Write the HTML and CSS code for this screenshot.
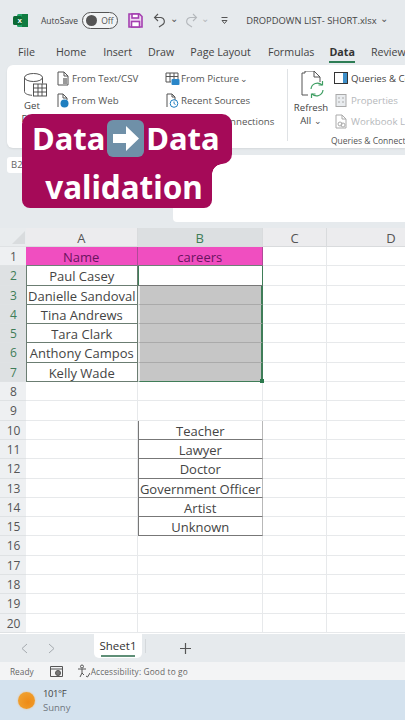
FILE: index.html
```html
<!DOCTYPE html>
<html lang="en">
<head>
<meta charset="utf-8">
<title>DROPDOWN LIST- SHORT.xlsx</title>
<link rel="stylesheet" href="styles.css">
</head>
<body>
<div class="app">
  <header class="titlebar">
    <svg class="logo" width="15" height="15" viewBox="0 0 15 15"><rect x="4" y="1" width="11" height="13" rx="1.5" fill="#21a366"/><rect x="9" y="1" width="6" height="13" fill="#107c41"/><rect y="3" width="9" height="9" rx="1.5" fill="#0b6a35"/><text x="4.5" y="10" class="logo-x">x</text></svg>
    <span class="autosave">AutoSave</span>
    <span class="toggle"><span class="knob"></span><span class="toggle-text">Off</span></span>
    <svg class="save" width="15" height="15" viewBox="0 0 15 15" fill="none" stroke="#a43fb0" stroke-width="1.6"><path d="M1 1h10.500L14 3.500V14H1z" fill="#efd9f2"/><rect x="4" y="1" width="6.500" height="4" fill="#fff"/><rect x="3.500" y="8.500" width="8" height="5.500" fill="#fff"/></svg>
    <svg class="undo" width="14" height="15" viewBox="0 0 14 15" fill="none" stroke="#555" stroke-width="1.1"><path d="M5 1 1.500 4.500 5 8M1.500 4.500h6.500a4 4 0 0 1 1 7.600L6 14"/></svg>
    <span class="caret">&#8964;</span>
    <svg class="redo" width="14" height="15" viewBox="0 0 14 15" fill="none" stroke="#b4b8bc" stroke-width="1.1"><path d="M9 1l3.500 3.500L9 8M12.500 4.500H6a4 4 0 0 0-1 7.600L8 14"/></svg>
    <span class="caret faint">&#8964;</span>
    <svg class="qat" width="9" height="9" viewBox="0 0 9 9" fill="none" stroke="#555"><path d="M1.500 1.500h6M2 4.500l2.500 3 2.500-3z"/></svg>
    <span class="filename">DROPDOWN LIST- SHORT.xlsx</span>
    <span class="caret file-caret">&#8964;</span>
  </header>

  <nav class="tabs">
    <span class="tab tab-file">File</span>
    <span class="tab tab-home">Home</span>
    <span class="tab tab-insert">Insert</span>
    <span class="tab tab-draw">Draw</span>
    <span class="tab tab-layout">Page Layout</span>
    <span class="tab tab-formulas">Formulas</span>
    <span class="tab tab-data">Data</span>
    <span class="tab tab-review">Review</span>
  </nav>

  <section class="ribbon">
    <div class="getdata">
      <svg width="23" height="24" viewBox="0 0 23 24" fill="none" stroke="#555" stroke-width="1"><ellipse cx="9.500" cy="4.500" rx="9" ry="4"/><path d="M.5 4.500v14c0 2 3 3.500 7.500 3.800M18.500 4.500v6"/><g fill="#fff" stroke="#444" stroke-width=".9"><rect x="9.500" y="11" width="13" height="12"/><path d="M9.500 15h13M9.500 19h13M14 11v12M18 11v12"/></g></svg>
      <span class="big-label">Get</span>
      <span class="big-label">Data</span>
    </div>
    <div class="cmds cmds-a">
      <div class="cmd"><svg width="12" height="15" viewBox="0 0 12 15" fill="none" stroke="#555"><path d="M1 1h6l4 4v9H1zM7 1v4h4"/><path d="M6 7h4v6H6z" fill="#999" stroke="none"/></svg>From Text/CSV</div>
      <div class="cmd"><svg width="12" height="15" viewBox="0 0 12 15" fill="none" stroke="#555"><path d="M1 14V1h5l4 4v2M6 1v4h4"/><circle cx="7.500" cy="10.500" r="4" fill="#1f7fc0" stroke="none"/></svg>From Web</div>
      <div class="cmd">From Table</div>
    </div>
    <div class="cmds cmds-b">
      <div class="cmd"><svg width="15" height="14" viewBox="0 0 15 14" fill="none" stroke="#555"><path d="M1 1h12v6M1 1v9h5M1 4.500h12M5 1v9M9 1v6"/><rect x="6.500" y="7" width="8" height="6" rx="1" fill="#2a86c8" stroke="none"/></svg>From Picture <span class="caret small">&#8964;</span></div>
      <div class="cmd"><svg width="15" height="15" viewBox="0 0 15 15" fill="none" stroke="#555"><path d="M2 14V1h5l3 3v3M7 1v3h3"/><circle cx="9" cy="10.500" r="3.800" stroke="#1f7fc0"/><path d="M9 8.500v2l1.500 1" stroke="#1f7fc0"/></svg>Recent Sources</div>
      <div class="cmd"><svg width="15" height="15" viewBox="0 0 15 15" fill="none" stroke="#555"><path d="M2 14V1h7l3 3v10z"/></svg>Existing Connections</div>
    </div>
    <div class="divider"></div>
    <div class="refresh">
      <svg width="26" height="27" viewBox="0 0 26 27" fill="none" stroke="#555" stroke-width="1"><path d="M4 2v22h6M4 2h3M7 2V0h9l6 6v5M16 0v6h6"/><g stroke="#3e9e62" stroke-width="1.200"><path d="M13 18a6.500 6.500 0 0 1 11-4M25 19a6.500 6.500 0 0 1-11 4"/><path d="M24.500 10v4h-4M13.500 27v-4h4"/></g></svg>
      <span class="big-label">Refresh</span>
      <span class="big-label">All <span class="caret small">&#8964;</span></span>
    </div>
    <div class="queries">
      <div class="cmd"><svg width="14" height="13" viewBox="0 0 14 13" fill="none" stroke="#333"><rect x=".5" y=".5" width="13" height="11"/><rect x="9" y="1" width="4" height="10" fill="#3d8fc9" stroke="none"/></svg>Queries &amp; Connections</div>
      <div class="cmd off"><svg width="14" height="13" viewBox="0 0 14 13" fill="#e9ecef" stroke="#aaa"><rect x="2" y=".5" width="10" height="12"/><path d="M4 4h2M8 4h2M4 8h2M8 8h2"/></svg>Properties</div>
      <div class="cmd off"><svg width="14" height="15" viewBox="0 0 14 15" fill="none" stroke="#aaa"><path d="M2 14V1h6l4 4v9zM8 1v4h4"/><circle cx="6" cy="10" r="2"/><circle cx="9" cy="11" r="2"/></svg>Workbook Links</div>
      <div class="group-label">Queries &amp; Connections</div>
    </div>
  </section>

  <section class="formula">
    <div class="namebox">B2</div>
    <div class="input"></div>
  </section>

  <section class="grid">
    <div class="row row-head"><div class="rh corner"><span class="tri"></span></div><div class="c a hd">A</div><div class="c b hd sel">B</div><div class="c d hd">C</div><div class="c e hd">D</div></div>
    <div class="row"><div class="rh">1</div><div class="c a pink">Name</div><div class="c b pink">careers</div><div class="c d"></div><div class="c e"></div></div>
    <div class="row"><div class="rh on">2</div><div class="c a box">Paul Casey</div><div class="c b range first"></div><div class="c d"></div><div class="c e"></div></div>
    <div class="row"><div class="rh on">3</div><div class="c a box">Danielle Sandoval</div><div class="c b range gray"></div><div class="c d"></div><div class="c e"></div></div>
    <div class="row"><div class="rh on">4</div><div class="c a box">Tina Andrews</div><div class="c b range gray"></div><div class="c d"></div><div class="c e"></div></div>
    <div class="row"><div class="rh on">5</div><div class="c a box">Tara Clark</div><div class="c b range gray"></div><div class="c d"></div><div class="c e"></div></div>
    <div class="row"><div class="rh on">6</div><div class="c a box">Anthony Campos</div><div class="c b range gray"></div><div class="c d"></div><div class="c e"></div></div>
    <div class="row"><div class="rh on">7</div><div class="c a box">Kelly Wade</div><div class="c b range gray last"><span class="handle"></span></div><div class="c d"></div><div class="c e"></div></div>
    <div class="row"><div class="rh">8</div><div class="c a"></div><div class="c b"></div><div class="c d"></div><div class="c e"></div></div>
    <div class="row"><div class="rh">9</div><div class="c a"></div><div class="c b"></div><div class="c d"></div><div class="c e"></div></div>
    <div class="row"><div class="rh">10</div><div class="c a"></div><div class="c b box2">Teacher</div><div class="c d"></div><div class="c e"></div></div>
    <div class="row"><div class="rh">11</div><div class="c a"></div><div class="c b box2">Lawyer</div><div class="c d"></div><div class="c e"></div></div>
    <div class="row"><div class="rh">12</div><div class="c a"></div><div class="c b box2">Doctor</div><div class="c d"></div><div class="c e"></div></div>
    <div class="row"><div class="rh">13</div><div class="c a"></div><div class="c b box2">Government Officer</div><div class="c d"></div><div class="c e"></div></div>
    <div class="row"><div class="rh">14</div><div class="c a"></div><div class="c b box2">Artist</div><div class="c d"></div><div class="c e"></div></div>
    <div class="row"><div class="rh">15</div><div class="c a"></div><div class="c b box2">Unknown</div><div class="c d"></div><div class="c e"></div></div>
    <div class="row"><div class="rh">16</div><div class="c a"></div><div class="c b"></div><div class="c d"></div><div class="c e"></div></div>
    <div class="row"><div class="rh">17</div><div class="c a"></div><div class="c b"></div><div class="c d"></div><div class="c e"></div></div>
    <div class="row"><div class="rh">18</div><div class="c a"></div><div class="c b"></div><div class="c d"></div><div class="c e"></div></div>
    <div class="row"><div class="rh">19</div><div class="c a"></div><div class="c b"></div><div class="c d"></div><div class="c e"></div></div>
    <div class="row"><div class="rh">20</div><div class="c a"></div><div class="c b"></div><div class="c d"></div><div class="c e"></div></div>
  </section>

  <section class="sheetbar">
    <svg class="nav" width="7" height="11" viewBox="0 0 7 11" fill="none" stroke="#a5aaaf"><path d="M6 1 1 5.500 6 10"/></svg>
    <svg class="nav nav-next" width="7" height="11" viewBox="0 0 7 11" fill="none" stroke="#a5aaaf"><path d="M1 1l5 4.500L1 10"/></svg>
    <div class="sheet-tab">Sheet1</div>
    <svg class="plus" width="11" height="11" viewBox="0 0 11 11" stroke="#555" stroke-width="1.200"><path d="M5.500 0v11M0 5.500h11"/></svg>
  </section>

  <footer class="status">
    <span class="ready">Ready</span>
    <svg class="macro" width="13" height="13" viewBox="0 0 13 13" fill="none" stroke="#555"><path d="M.5 1.500h12v10H.5zM.5 4h12"/><circle cx="8" cy="8" r="2.500" fill="#777"/></svg>
    <svg class="access" width="13" height="14" viewBox="0 0 13 14" fill="none" stroke="#555"><circle cx="5" cy="2.500" r="1.500"/><path d="M1 5h8M5 5v4l-2 4M5 9l2 2M9 12l1.500 1L13 9"/></svg>
    <span class="access-text">Accessibility: Good to go</span>
  </footer>

  <div class="taskbar">
    <span class="sun"></span>
    <div class="weather"><span class="temp">101°F</span><span class="sky">Sunny</span></div>
  </div>

  <div class="banner">
    <div class="banner-top">Data<svg class="arrow" width="37" height="37" viewBox="0 0 37 37"><rect width="37" height="37" rx="6" fill="#6f90a8"/><path d="M6 14h13V6l13 12.500L19 31v-8H6z" fill="#fff"/></svg>Data</div>
    <div class="banner-bottom">validation</div>
  </div>
</div>
</body>
</html>
```
FILE: styles.css
```css
* { box-sizing: border-box; }
html, body { margin: 0; padding: 0; }
body { width: 405px; height: 720px; overflow: hidden; font-family: "Open Sans", "Noto Sans", sans-serif; color: #333; }
.app { position: relative; width: 405px; height: 720px; background: #e6eaed; overflow: hidden; }

.titlebar { height: 40px; display: flex; align-items: center; padding: 0 0 0 13px; white-space: nowrap; }
.logo-x { font: bold 8px "Liberation Sans", sans-serif; fill: #fff; }
.autosave { margin-left: 13px; font-size: 8.5px; color: #444; }
.toggle { margin-left: 4px; width: 36px; height: 17px; border: 1px solid #555; border-radius: 9px; background: #f2f4f5; display: flex; align-items: center; padding-left: 3px; }
.knob { width: 11px; height: 11px; border-radius: 50%; background: #555; }
.toggle-text { margin-left: 4px; font-size: 8.500px; color: #555; }
.save { margin-left: 10px; }
.undo { margin-left: 10px; }
.redo { margin-left: 6px; }
.caret { font-size: 10px; line-height: 1; color: #555; margin: -4px 0 0 3px; }
.caret.faint { color: #b4b8bc; }
.caret.small { font-size: 9px; margin: 0; }
.qat { margin-left: 11px; }
.filename { margin-left: 17px; font-size: 9.400px; color: #444; }
.file-caret { margin-left: 3px; }

.tabs { height: 25px; display: flex; align-items: flex-start; font-size: 10.700px; color: #444; white-space: nowrap; }
.tab { padding-top: 5px; }
.tab-file { margin-left: 18px; }
.tab-home { margin-left: 21px; }
.tab-insert { margin-left: 17px; }
.tab-draw { margin-left: 16px; }
.tab-layout { margin-left: 16px; }
.tab-formulas { margin-left: 17px; }
.tab-data { margin-left: 15px; height: 23px; font-weight: 700; color: #333; border-bottom: 2px solid #2e7d55; }
.tab-review { margin-left: 16px; }

.ribbon { position: relative; margin-left: 7px; height: 83px; background: #fff; border-radius: 6px 0 0 6px; display: flex; font-size: 9.700px; color: #555; white-space: nowrap; box-shadow: 0 1px 2px rgba(0,0,0,.08); }
.getdata { flex: none; width: 50px; padding-top: 8px; display: flex; flex-direction: column; align-items: center; }
.getdata svg { margin: 0 0 2px 7px; }
.big-label { display: block; line-height: 13px; font-size: 9.600px; color: #444; }
.cmds, .queries { flex: none; display: flex; flex-direction: column; padding-top: 3px; }
.cmd { height: 21.500px; display: flex; align-items: center; gap: 3px; }
.cmds-a { width: 108px; }
.cmds-b { width: 122px; }
.cmds-b .cmd { gap: 1px; }
.divider { flex: none; width: 1px; height: 72px; margin-top: 4px; background: #dfe2e5; }
.refresh { flex: none; width: 46px; padding-top: 6px; display: flex; flex-direction: column; align-items: center; }
.refresh svg { margin-bottom: 3px; }
.queries { color: #444; }
.off { color: #b5b8bb; }
.group-label { font-size: 8.500px; margin: 2px 0 0 -3px; color: #555; }

.formula { position: relative; height: 80px; }
.namebox { position: absolute; left: 7px; top: 9px; width: 60px; height: 16px; background: #fff; border-radius: 3px; font-size: 9.500px; color: #666; padding: 1px 0 0 4px; }
.input { position: absolute; left: 173px; right: 0; top: 7px; height: 67px; background: #fff; border-radius: 4px 0 0 4px; }

.grid { background: #fff; height: 406px; }
.row { display: flex; height: 19.300px; font-size: 13px; color: #444; line-height: 20px; }
.row-head { height: 19px; background: #e9ecee; color: #555; }
.rh { width: 26px; flex: none; background: #eef0f2; text-align: center; font-size: 12px; padding-left: 1px; border-bottom: 1px solid #dfe2e4; color: #555; }
.rh.on { background: #dee1e3; color: #3f7d58; }
.corner { position: relative; background: #e9ecee; }
.tri { position: absolute; right: 1px; bottom: 2px; border-style: solid; border-width: 0 0 13px 13px; border-color: transparent transparent #d9dcde transparent; }
.c { flex: none; text-align: center; border-right: 1px solid #e7e9eb; border-bottom: 1px solid #e7e9eb; white-space: nowrap; overflow: hidden; }
.a { width: 111.500px; }
.b { width: 125.500px; }
.d { width: 64px; }
.e { width: 128px; border-right: 0; }
.hd { background: #ececee; border-color: #d9dbdd; }
.hd.sel { background: #dcdfe1; color: #3f7d58; }
.pink { background: #f04ec0; color: #6a1460; border-right: 1px solid #b04a98; border-bottom: 1px solid #6f7f78; }
.box { border: 0 solid #6b7d72; border-width: 0 1px 1px 1px; }
.range { border: 0 solid #3f7d58; border-width: 0 1px 0 1px; position: relative; }
.first { border-bottom: 1px solid #777; }
.gray { background: #c6c6c6; border-left: 2px solid #eee; border-right: 2px solid #3f7d58; border-bottom: 1px solid #aaa; }
.last { border-bottom: 1px solid #3f7d58; overflow: visible; }
.handle { position: absolute; right: -3px; bottom: -2px; width: 4px; height: 4px; background: #2c7a4d; }
.box2 { border: 0 solid #777; border-width: 0 1px 1px 1px; border-right-color: #b8b8b8; }

.sheetbar { height: 28px; background: #e6eaed; display: flex; align-items: center; position: relative; }
.nav { margin-left: 21px; }
.nav-next { margin-left: 20px; }
.sheet-tab { margin: -4px 0 0 39px; width: 48px; height: 24px; background: #fff; border-radius: 0 0 5px 5px; text-align: center; font-size: 11.500px; line-height: 24px; color: #333; position: relative; }
.sheet-tab::after { content: ""; position: absolute; left: 7px; right: 7px; bottom: 1px; height: 2px; background: #5f8f77; }
.sheet-tab::before { content: ""; position: absolute; right: -4px; top: 5px; width: 1px; height: 14px; background: #d4d8db; }
.plus { margin-left: 38px; }

.status { height: 18px; background: #f3f4f5; display: flex; align-items: center; font-size: 8.300px; color: #666; white-space: nowrap; }
.ready { margin-left: 10px; }
.macro { margin-left: 16px; }
.access { margin-left: 14px; }
.access-text { margin-left: 1px; letter-spacing: .15px; }

.taskbar { height: 40px; background: #d4e2ee; display: flex; align-items: center; }
.sun { margin: 0 0 0 18px; width: 17px; height: 17px; border-radius: 50%; background: radial-gradient(circle at 60% 60%, #ee8a16, #f0a838); box-shadow: 0 0 2px #f3b676; }
.weather { margin-left: 8px; padding-top: 2px; display: flex; flex-direction: column; font-size: 9.500px; line-height: 14px; }
.temp { color: #444; letter-spacing: -.4px; }
.sky { color: #70777e; }

.banner { position: absolute; left: 22px; top: 114px; font-family: "Noto Sans", sans-serif; font-weight: 700; color: #fff; }
.banner-top { width: 210px; height: 50px; background: #a50a58; border-radius: 10px 10px 10px 0; font-size: 31px; padding: 6px 0 0 10px; line-height: 37px; display: flex; align-items: flex-start; gap: 2px; }
.arrow { flex: none; }
.banner-bottom { position: relative; width: 190px; height: 44px; background: #a50a58; border-radius: 0 0 8px 8px; font-size: 31.500px; line-height: 40px; text-align: center; padding: 3px 0 0 14px; }
.banner-bottom::after { content: ""; position: absolute; left: 100%; top: 0; width: 10px; height: 10px; background: radial-gradient(circle at 100% 100%, transparent 9.500px, #a50a58 10px); }
```
